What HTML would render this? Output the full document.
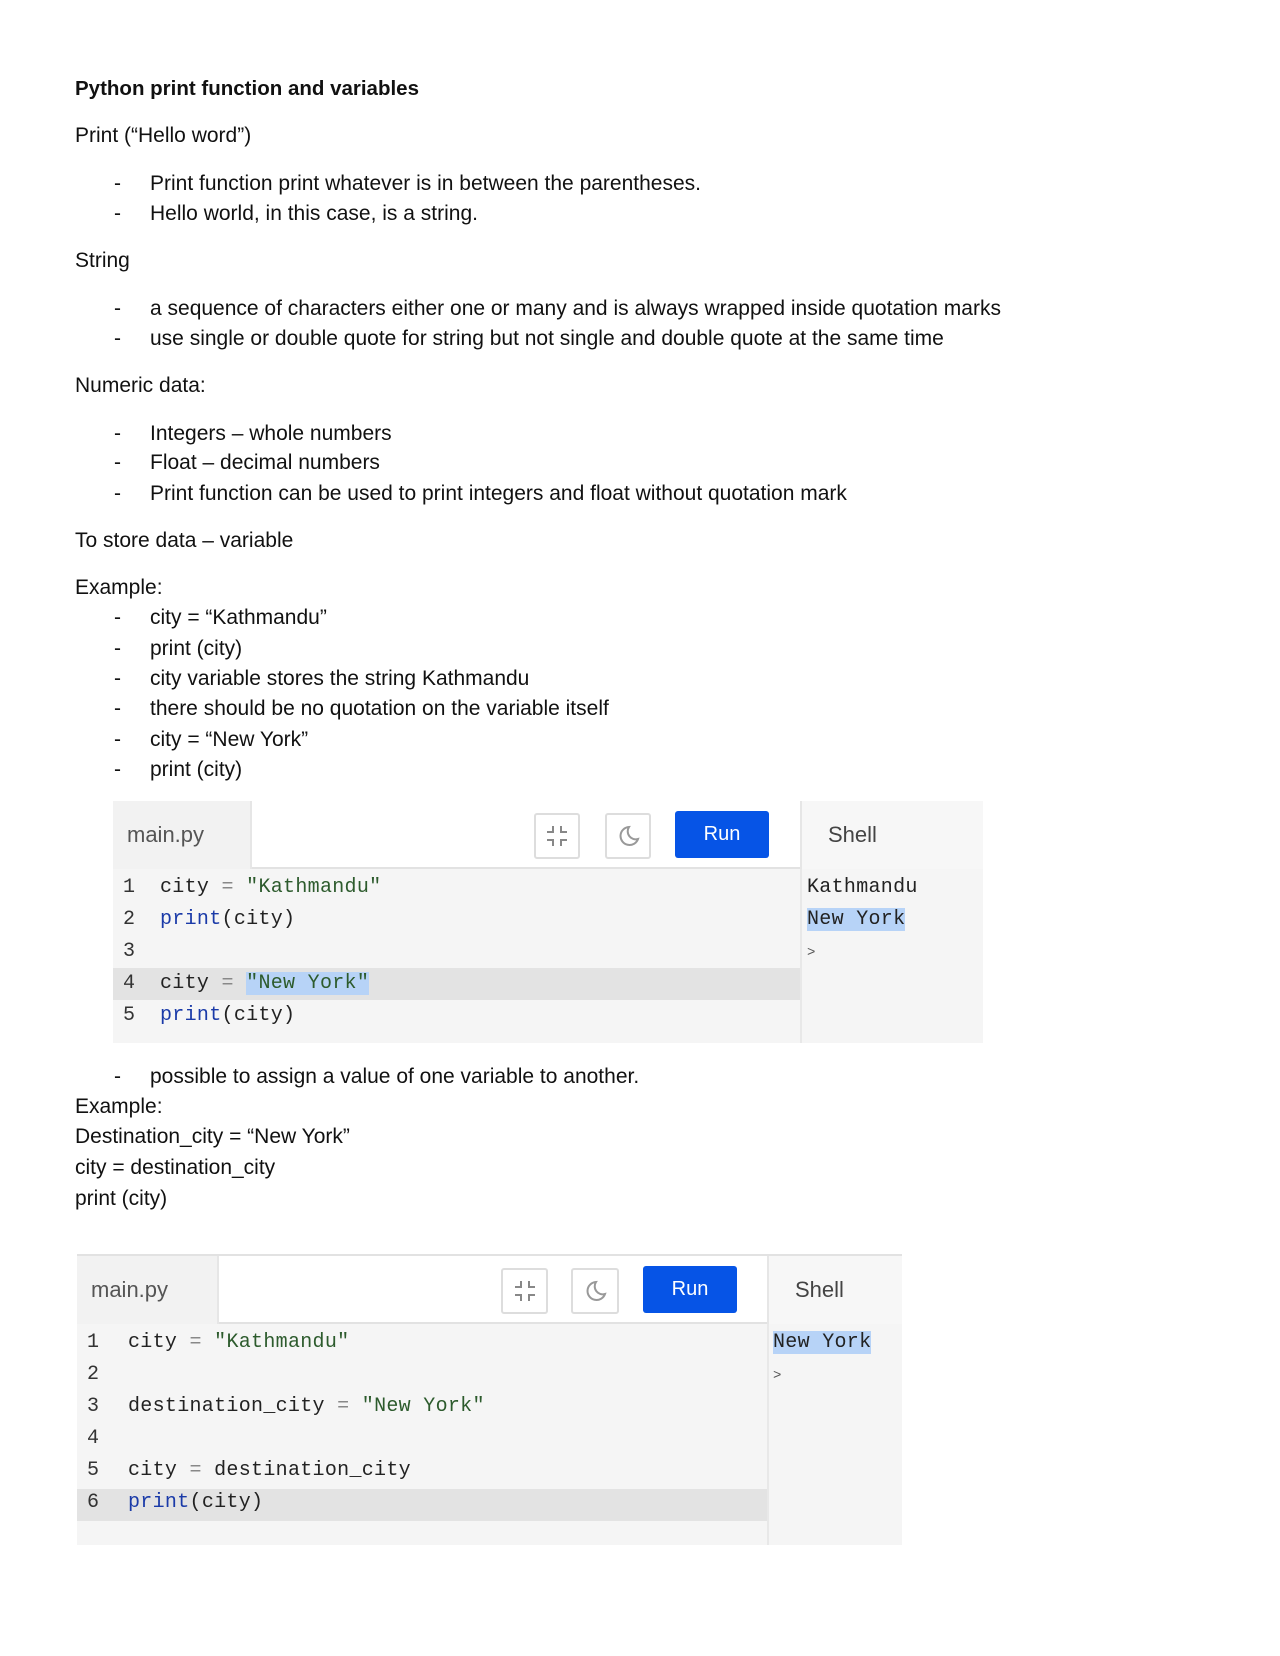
<!DOCTYPE html>
<html><head><meta charset="utf-8"><style>
body{margin:0;width:1280px;height:1656px;background:#fff;position:relative;font-family:"Liberation Sans",sans-serif;color:#111;overflow:hidden}
.t{position:absolute;font-size:21px;line-height:24px;white-space:nowrap}
.b{font-weight:bold;font-size:20.5px}
.d{position:absolute;font-size:21px;line-height:24px}
.blk{position:absolute;background:#f5f5f5}
.hdr{position:absolute;left:0;right:0;top:0;background:#fff;border-bottom:2px solid #e2e2e2}
.tab{position:absolute;left:0;top:0;background:#f2f2f2;color:#555;font-size:22px;display:flex;align-items:center;padding-left:14px;box-sizing:border-box;border-right:2px solid #e6e6e6}
.btn{position:absolute;border:2px solid #ddd;border-radius:3px;box-sizing:border-box;background:#fff;display:flex;align-items:center;justify-content:center}
.run{position:absolute;background:#0654e6;color:#fff;border-radius:3px;font-size:20px;display:flex;align-items:center;justify-content:center}
.shellh{position:absolute;top:0;right:0;background:#f7f7f7;color:#444;font-size:22px;display:flex;align-items:center;box-sizing:border-box;border-left:2px solid #e6e6e6}
.code{position:absolute;font-family:"Liberation Mono",monospace;font-size:20px;letter-spacing:0.3px;line-height:32px;white-space:pre;color:#222}
.ln{position:absolute;font-family:"Liberation Mono",monospace;font-size:20px;line-height:32px;color:#333}
.s{color:#2d5b2d}.k{color:#1a3aa8}.o{color:#888}
.sel{background:#b7d3f7}
.cur{position:absolute;left:0;background:#e3e3e3;height:32px}
.sh{position:absolute;font-family:"Liberation Mono",monospace;font-size:20px;letter-spacing:0.3px;line-height:32px;white-space:pre;color:#222}
.div{position:absolute;top:0;bottom:0;width:2px;background:#e8e8e8}
</style></head><body>
<div class="t b" style="left:75px;top:77px">Python print function and variables</div>
<div class="t" style="left:75px;top:124px">Print (“Hello word”)</div>
<div class="d" style="left:114px;top:172px">-</div><div class="t" style="left:150px;top:172px">Print function print whatever is in between the parentheses.</div>
<div class="d" style="left:114px;top:202px">-</div><div class="t" style="left:150px;top:202px">Hello world, in this case, is a string.</div>
<div class="t" style="left:75px;top:249px">String</div>
<div class="d" style="left:114px;top:297px">-</div><div class="t" style="left:150px;top:297px">a sequence of characters either one or many and is always wrapped inside quotation marks</div>
<div class="d" style="left:114px;top:327px">-</div><div class="t" style="left:150px;top:327px">use single or double quote for string but not single and double quote at the same time</div>
<div class="t" style="left:75px;top:374px">Numeric data:</div>
<div class="d" style="left:114px;top:422px">-</div><div class="t" style="left:150px;top:422px">Integers – whole numbers</div>
<div class="d" style="left:114px;top:451px">-</div><div class="t" style="left:150px;top:451px">Float – decimal numbers</div>
<div class="d" style="left:114px;top:482px">-</div><div class="t" style="left:150px;top:482px">Print function can be used to print integers and float without quotation mark</div>
<div class="t" style="left:75px;top:529px">To store data – variable</div>
<div class="t" style="left:75px;top:576px">Example:</div>
<div class="d" style="left:114px;top:606px">-</div><div class="t" style="left:150px;top:606px">city = “Kathmandu”</div>
<div class="d" style="left:114px;top:637px">-</div><div class="t" style="left:150px;top:637px">print (city)</div>
<div class="d" style="left:114px;top:667px">-</div><div class="t" style="left:150px;top:667px">city variable stores the string Kathmandu</div>
<div class="d" style="left:114px;top:697px">-</div><div class="t" style="left:150px;top:697px">there should be no quotation on the variable itself</div>
<div class="d" style="left:114px;top:728px">-</div><div class="t" style="left:150px;top:728px">city = “New York”</div>
<div class="d" style="left:114px;top:758px">-</div><div class="t" style="left:150px;top:758px">print (city)</div>

<!-- block 1 -->
<div class="blk" style="left:113px;top:801px;width:870px;height:242px">
  <div class="hdr" style="height:66px"></div>
  <div class="tab" style="width:139px;height:68px">main.py</div>
  <div class="btn" style="left:421px;top:12px;width:46px;height:46px"><svg width="26" height="26" viewBox="0 0 26 26" fill="none" stroke="#888" stroke-width="2"><path d="M9 3v6H3M17 3v6h6M9 23v-6H3M17 23v-6h6"/></svg></div>
  <div class="btn" style="left:492px;top:12px;width:46px;height:46px"><svg width="26" height="26" viewBox="0 0 26 26" fill="none" stroke="#999" stroke-width="2"><path d="M14 4a9 9 0 1 0 9 12A8 8 0 0 1 14 4z"/></svg></div>
  <div class="run" style="left:562px;top:10px;width:94px;height:47px">Run</div>
  <div class="shellh" style="left:687px;height:68px;padding-left:26px">Shell</div>
  <div class="div" style="left:687px;top:68px"></div>
  <div class="cur" style="top:167px;width:687px"></div>
  <div class="ln" style="left:10px;top:71px">1<br>2<br>3<br>4<br>5</div>
  <div class="code" style="left:47px;top:71px">city <span class="o">=</span> <span class="s">"Kathmandu"</span>
<span class="k">print</span>(city)

city <span class="o">=</span> <span class="sel s">"New York"</span>
<span class="k">print</span>(city)</div>
  <div class="sh" style="left:694px;top:71px">Kathmandu
<span class="sel">New York</span>
<span style="font-size:14px;color:#555">&gt;</span></div>
</div>

<div class="d" style="left:114px;top:1065px">-</div><div class="t" style="left:150px;top:1065px">possible to assign a value of one variable to another.</div>
<div class="t" style="left:75px;top:1095px">Example:</div>
<div class="t" style="left:75px;top:1125px">Destination_city = “New York”</div>
<div class="t" style="left:75px;top:1156px">city = destination_city</div>
<div class="t" style="left:75px;top:1187px">print (city)</div>

<!-- block 2 -->
<div style="position:absolute;left:77px;top:1222px;width:825px;height:32px;background:#fff;border-bottom:2px solid #e2e2e2"></div>
<div class="blk" style="left:77px;top:1256px;width:825px;height:289px">
  <div class="hdr" style="height:66px"></div>
  <div class="tab" style="width:142px;height:68px">main.py</div>
  <div class="btn" style="left:424px;top:12px;width:47px;height:46px"><svg width="26" height="26" viewBox="0 0 26 26" fill="none" stroke="#888" stroke-width="2"><path d="M9 3v6H3M17 3v6h6M9 23v-6H3M17 23v-6h6"/></svg></div>
  <div class="btn" style="left:494px;top:12px;width:48px;height:46px"><svg width="26" height="26" viewBox="0 0 26 26" fill="none" stroke="#999" stroke-width="2"><path d="M14 4a9 9 0 1 0 9 12A8 8 0 0 1 14 4z"/></svg></div>
  <div class="run" style="left:566px;top:10px;width:94px;height:47px">Run</div>
  <div class="shellh" style="left:690px;height:68px;padding-left:26px">Shell</div>
  <div class="div" style="left:690px;top:68px"></div>
  <div class="cur" style="top:233px;width:690px"></div>
  <div class="ln" style="left:10px;top:71px">1<br>2<br>3<br>4<br>5<br>6</div>
  <div class="code" style="left:51px;top:71px">city <span class="o">=</span> <span class="s">"Kathmandu"</span>

destination_city <span class="o">=</span> <span class="s">"New York"</span>

city <span class="o">=</span> destination_city
<span class="k">print</span>(city)</div>
  <div class="sh" style="left:696px;top:71px"><span class="sel">New York</span>
<span style="font-size:14px;color:#555">&gt;</span></div>
</div>
</body></html>
